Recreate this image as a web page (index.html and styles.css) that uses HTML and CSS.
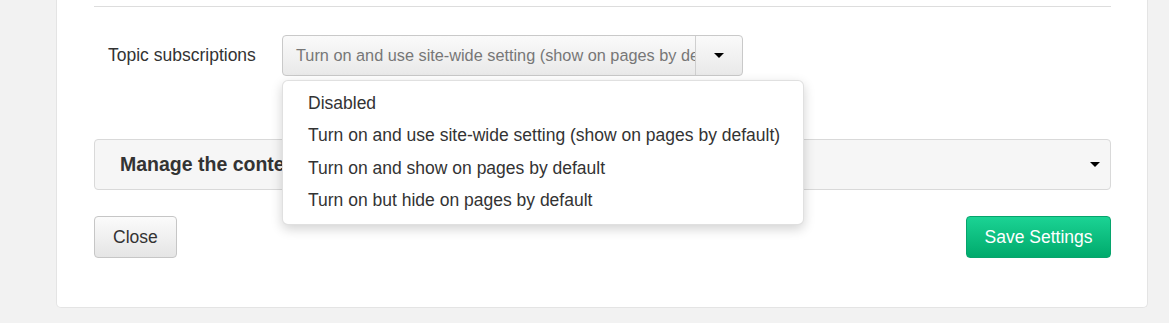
FILE: index.html
```html
<!DOCTYPE html>
<html lang="en">
<head>
    <meta charset="UTF-8">
    <title>Topic settings</title>
    <link rel="stylesheet" href="styles.css">
</head>
<body>
    <div class="panel">
        <hr class="divider">

        <div class="form-row">
            <label class="form-label">Topic subscriptions</label>
            <div class="select-wrap">
                <div class="select-group">
                    <div class="select-value">Turn on and use site-wide setting (show on pages by default)</div>
                    <div class="select-toggle"><span class="caret"></span></div>
                </div>
                <ul class="dropdown-menu">
                    <li>Disabled</li>
                    <li>Turn on and use site-wide setting (show on pages by default)</li>
                    <li>Turn on and show on pages by default</li>
                    <li>Turn on but hide on pages by default</li>
                </ul>
            </div>
        </div>

        <div class="collapse-panel">
            <span class="collapse-title">Manage the content types for topics</span>
            <span class="caret"></span>
        </div>

        <div class="actions">
            <button class="btn">Close</button>
            <button class="btn btn-success">Save Settings</button>
        </div>
    </div>
</body>
</html>
```

FILE: styles.css
```css
body {
    margin: 0;
    background-color: #f2f2f2;
    font-family: "Liberation Sans", Arial, sans-serif;
    font-size: 17.5px;
    color: #333;
}
.panel {
    margin: -10px 0 0 56px;
    width: 1092px;
    box-sizing: border-box;
    padding: 16px 36px 49px 37px;
    background: #fff;
    border: 1px solid #e4e4e4;
    border-top: none;
    border-radius: 0 0 5px 5px;
}
.divider {
    margin: 0;
    border: none;
    border-top: 1px solid #ddd;
}
.form-row {
    display: flex;
    align-items: center;
    margin-top: 28px;
    padding-left: 14px;
}
.form-label {
    width: 174px;
}
.select-wrap {
    position: relative;
}
.select-group {
    display: flex;
    width: 461px;
    height: 41px;
    box-sizing: border-box;
    border: 1px solid #c9c9c9;
    border-radius: 4px;
    background: linear-gradient(#fafafa, #e9e9e9);
}
.select-value {
    flex: 1;
    overflow: hidden;
    white-space: nowrap;
    padding: 0 0 0 13px;
    line-height: 39px;
    font-size: 16.3px;
    color: #777;
}
.select-toggle {
    width: 46px;
    border-left: 1px solid #cfcfcf;
    display: flex;
    align-items: center;
    justify-content: center;
}
.caret {
    display: inline-block;
    width: 0;
    height: 0;
    border-top: 5px solid #000;
    border-left: 5px solid transparent;
    border-right: 5px solid transparent;
}
.dropdown-menu {
    position: absolute;
    top: 45px;
    left: 0;
    z-index: 10;
    width: 522px;
    box-sizing: border-box;
    margin: 0;
    padding: 6px 0 8px;
    list-style: none;
    background: #fff;
    border: 1px solid rgba(0,0,0,0.12);
    border-radius: 6px;
    box-shadow: 0 4px 12px rgba(0,0,0,0.18);
}
.dropdown-menu li {
    height: 32.3px;
    line-height: 32px;
    padding-left: 25px;
    white-space: nowrap;
}
.collapse-panel {
    display: flex;
    align-items: center;
    justify-content: space-between;
    margin-top: 63px;
    height: 51px;
    box-sizing: border-box;
    padding: 0 10px 0 25px;
    background: #f6f6f6;
    border: 1px solid #d9d9d9;
    border-radius: 4px;
}
.collapse-title {
    font-size: 19.5px;
    font-weight: bold;
}
.actions {
    display: flex;
    justify-content: space-between;
    margin-top: 26px;
}
.btn {
    height: 42px;
    padding: 0 18px;
    font-family: inherit;
    font-size: 17.5px;
    white-space: nowrap;
    color: #333;
    border: 1px solid #c6c6c6;
    border-radius: 4px;
    background: linear-gradient(#fbfbfb, #e5e5e5);
}
.btn-success {
    width: 145px;
    padding: 0;
    color: #fff;
    border-color: #06a46c;
    background: linear-gradient(#1bd394, #00aa6c);
}
```
